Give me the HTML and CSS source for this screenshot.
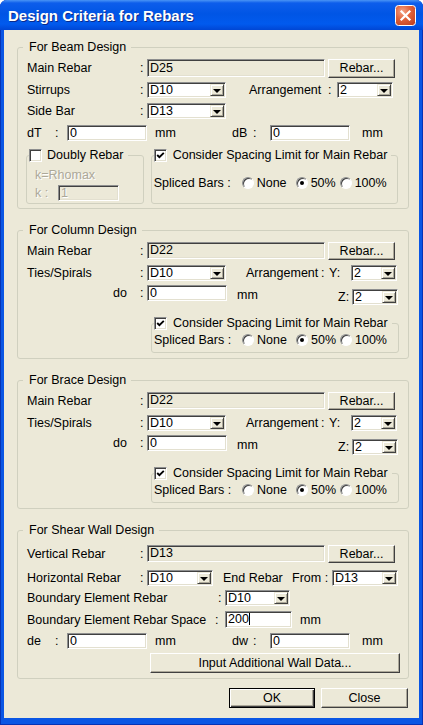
FILE: index.html
```html
<!DOCTYPE html>
<html lang="en">
<head>
  <meta charset="UTF-8" />
  <meta name="viewport" content="width=device-width, initial-scale=1.0"/>
  <title>Design Criteria for Rebars</title>
  <link rel="stylesheet" href="styles.css">
</head>
<body>

<div class="window">
  <div class="titlebar">
    <span class="title">Design Criteria for Rebars</span>
    <button class="close-btn" aria-label="Close">
      <svg width="21" height="21" viewBox="0 0 21 21">
        <defs>
          <radialGradient id="closeGrad" cx="35%" cy="30%" r="85%">
            <stop offset="0" stop-color="#F4A488"/>
            <stop offset="0.45" stop-color="#E2643C"/>
            <stop offset="1" stop-color="#C2401E"/>
          </radialGradient>
        </defs>
        <rect x="0.5" y="0.5" width="20" height="20" rx="3" fill="url(#closeGrad)" stroke="#fff"/>
        <path d="M6.5 6.5 L14.5 14.5 M14.5 6.5 L6.5 14.5" stroke="#fff" stroke-width="2.2" stroke-linecap="square"/>
      </svg>
    </button>
  </div>

  <div class="client">

    <!-- Beam -->
    <fieldset class="group">
      <legend>For Beam Design</legend>
      <div class="gbody">
        <div class="row tall mt5">
          <span class="lbl">Main Rebar</span><span class="colon">:</span>
          <span class="edit tall dis w-main">D25</span>
          <button class="btn btn-rebar">Rebar...</button>
        </div>
        <div class="row mt5">
          <span class="lbl">Stirrups</span><span class="colon">:</span>
          <span class="combo w79"><span class="val">D10</span><span class="drop"></span></span>
          <span class="arr-beam">Arrangement</span><span class="colon-9">:</span>
          <span class="combo w56"><span class="val">2</span><span class="drop"></span></span>
        </div>
        <div class="row mt5">
          <span class="lbl">Side Bar</span><span class="colon">:</span>
          <span class="combo w79"><span class="val">D13</span><span class="drop"></span></span>
        </div>
        <div class="row mt6">
          <span class="dlbl">dT</span><span class="dcolon">:</span>
          <span class="edit w80">0</span>
          <span class="mm-a">mm</span>
          <span class="dlbl2">dB</span><span class="dcolon2">:</span>
          <span class="edit w80">0</span>
          <span class="mm-b">mm</span>
        </div>

        <div class="subrow">
          <fieldset class="sub doubly">
            <legend class="chk-legend"><span class="chk"></span>Doubly Rebar</legend>
            <div class="doubly-body">
              <div class="dis-text rho">k=Rhomax</div>
              <div class="row krow">
                <span class="dis-text klbl">k :</span>
                <span class="edit dis w61"><span class="dis-text">1</span></span>
              </div>
            </div>
          </fieldset>
          <fieldset class="sub spacing">
            <legend class="chk-legend"><span class="chk on"><svg width="9" height="9" viewBox="0 0 9 9"><path d="M1.2 4 L3.4 6.2 L7.8 1.8" fill="none" stroke="#000" stroke-width="1.9"/></svg></span>Consider Spacing Limit for Main Rebar</legend>
            <div class="spliced beam-spl">
              <span class="spl-lbl">Spliced Bars :</span>
              <span class="opt o-none"><span class="radio"></span>None</span>
              <span class="opt o-50"><span class="radio on"></span>50%</span>
              <span class="opt"><span class="radio"></span>100%</span>
            </div>
          </fieldset>
        </div>
      </div>
    </fieldset>

    <!-- Column -->
    <fieldset class="group">
      <legend>For Column Design</legend>
      <div class="gbody pb5">
        <div class="row h17 mt5">
          <span class="lbl">Main Rebar</span><span class="colon">:</span>
          <span class="edit h17 dis w-main">D22</span>
          <button class="btn btn-rebar h17">Rebar...</button>
        </div>
        <div class="row mt6">
          <span class="lbl">Ties/Spirals</span><span class="colon">:</span>
          <span class="combo w79"><span class="val">D10</span><span class="drop"></span></span>
          <span class="arr-col">Arrangement</span><span class="axcolon">:</span><span class="axis">Y:</span>
          <span class="combo w46"><span class="val">2</span><span class="drop"></span></span>
        </div>
        <div class="row do-row mt4">
          <span class="lbl do">do</span><span class="colon">:</span>
          <span class="edit w80">0</span>
          <span class="mm-do">mm</span>
          <span class="zgroup"><span class="axis">Z:</span><span class="combo w46"><span class="val">2</span><span class="drop"></span></span></span>
        </div>
        <fieldset class="sub spacing solo">
          <legend class="chk-legend"><span class="chk on"><svg width="9" height="9" viewBox="0 0 9 9"><path d="M1.2 4 L3.4 6.2 L7.8 1.8" fill="none" stroke="#000" stroke-width="1.9"/></svg></span>Consider Spacing Limit for Main Rebar</legend>
          <div class="spliced">
            <span class="spl-lbl">Spliced Bars :</span>
            <span class="opt o-none"><span class="radio"></span>None</span>
            <span class="opt o-50"><span class="radio on"></span>50%</span>
            <span class="opt"><span class="radio"></span>100%</span>
          </div>
        </fieldset>
      </div>
    </fieldset>

    <!-- Brace -->
    <fieldset class="group">
      <legend>For Brace Design</legend>
      <div class="gbody pb5">
        <div class="row h17 mt5">
          <span class="lbl">Main Rebar</span><span class="colon">:</span>
          <span class="edit h17 dis w-main">D22</span>
          <button class="btn btn-rebar h17">Rebar...</button>
        </div>
        <div class="row mt6">
          <span class="lbl">Ties/Spirals</span><span class="colon">:</span>
          <span class="combo w79"><span class="val">D10</span><span class="drop"></span></span>
          <span class="arr-col">Arrangement</span><span class="axcolon">:</span><span class="axis">Y:</span>
          <span class="combo w46"><span class="val">2</span><span class="drop"></span></span>
        </div>
        <div class="row do-row mt4">
          <span class="lbl do">do</span><span class="colon">:</span>
          <span class="edit w80">0</span>
          <span class="mm-do">mm</span>
          <span class="zgroup"><span class="axis">Z:</span><span class="combo w46"><span class="val">2</span><span class="drop"></span></span></span>
        </div>
        <fieldset class="sub spacing solo">
          <legend class="chk-legend"><span class="chk on"><svg width="9" height="9" viewBox="0 0 9 9"><path d="M1.2 4 L3.4 6.2 L7.8 1.8" fill="none" stroke="#000" stroke-width="1.9"/></svg></span>Consider Spacing Limit for Main Rebar</legend>
          <div class="spliced">
            <span class="spl-lbl">Spliced Bars :</span>
            <span class="opt o-none"><span class="radio"></span>None</span>
            <span class="opt o-50"><span class="radio on"></span>50%</span>
            <span class="opt"><span class="radio"></span>100%</span>
          </div>
        </fieldset>
      </div>
    </fieldset>

    <!-- Shear wall -->
    <fieldset class="group">
      <legend>For Shear Wall Design</legend>
      <div class="gbody pb7">
        <div class="row h17 mt8">
          <span class="lbl">Vertical Rebar</span><span class="colon">:</span>
          <span class="edit h17 dis w-main">D13</span>
          <button class="btn btn-rebar h17">Rebar...</button>
        </div>
        <div class="row mt8">
          <span class="lbl">Horizontal Rebar</span><span class="colon">:</span>
          <span class="combo w66"><span class="val">D10</span><span class="drop"></span></span>
          <span class="endrebar">End Rebar</span><span class="from">From :</span>
          <span class="combo w66"><span class="val">D13</span><span class="drop"></span></span>
        </div>
        <div class="row mt4">
          <span class="lbl-be">Boundary Element Rebar</span><span class="colon">:</span>
          <span class="combo w65"><span class="val">D10</span><span class="drop"></span></span>
        </div>
        <div class="row h17 mt5">
          <span class="lbl-bes">Boundary Element Rebar Space</span><span class="colon-10">:</span>
          <span class="edit h17 w67">200<span class="caret"></span></span>
          <span class="mm-bes">mm</span>
        </div>
        <div class="row mt5">
          <span class="dlbl">de</span><span class="dcolon">:</span>
          <span class="edit w80">0</span>
          <span class="mm-a">mm</span>
          <span class="dlbl2">dw</span><span class="dcolon2">:</span>
          <span class="edit w80">0</span>
          <span class="mm-b">mm</span>
        </div>
        <div class="row mt6">
          <button class="btn btn-wall">Input Additional Wall Data...</button>
        </div>
      </div>
    </fieldset>

    <div class="footer">
      <button class="btn btn-ok">OK</button>
      <button class="btn btn-close">Close</button>
    </div>

  </div>
</div>

</body>
</html>
```

FILE: styles.css
```css
* {
  box-sizing: border-box;
}

body {
  margin: 0;
  background: #fff;
  font-family: "Liberation Sans", Arial, sans-serif;
  font-size: 12.5px;
  color: #000;
}

/* window frame */
.window {
  width: 423px;
  height: 725px;
  background: #0A56E4;
  border-radius: 7px 7px 0 0;
  overflow: hidden;
  box-shadow: inset 1px 0 0 #0633B5, inset -1px 0 0 #0633B5, inset 0 -1px 0 #0633B5;
}

.titlebar {
  height: 30px;
  display: flex;
  align-items: center;
  justify-content: space-between;
  padding: 0 7px 0 8px;
  background: linear-gradient(180deg, #4A94F5 0px, #0D5DEB 3px, #0055E5 14px, #015AEE 24px, #0046D4 30px);
}

.title {
  color: #fff;
  font-weight: bold;
  font-size: 15px;
  text-shadow: 1px 1px 0 #0B2A8A;
}

.close-btn {
  width: 21px;
  height: 21px;
  padding: 0;
  border: 0;
  background: none;
  display: block;
}

.close-btn svg {
  display: block;
}

.client {
  margin: 0 4px;
  height: 688px;
  background: #ECE9D8;
  padding-top: 10px;
}

/* group boxes */
.group {
  margin: 0 0 0 13px;
  width: 392px;
  min-width: 0;
  padding: 0;
  border: 1px solid #D0D0BF;
  border-radius: 3px;
}

.group + .group {
  margin-top: 14px;
}

.group > legend {
  margin-left: 5px;
  padding: 0 5px 0 6px;
  line-height: 14px;
}

.gbody {
  padding: 0 10px 4px 9px;
}

.pb5 { padding-bottom: 5px; }
.pb7 { padding-bottom: 7px; }

.mt4 { margin-top: 4px; }
.mt5 { margin-top: 5px; }
.mt6 { margin-top: 6px; }
.mt8 { margin-top: 8px; }

.row {
  display: flex;
  align-items: center;
  height: 16px;
  white-space: nowrap;
}

.row > * {
  flex: none;
}

.row.tall { height: 18px; }
.row.h17 { height: 17px; }

.lbl { width: 113px; }
.lbl.do { padding-left: 86px; }
.colon { width: 7px; }
.colon-9 { width: 9px; }
.colon-10 { width: 10px; }

/* edit boxes */
.edit {
  display: block;
  height: 16px;
  background: #fff;
  border: 1px solid;
  border-color: #8E8F8F #FFFFFF #FFFFFF #8E8F8F;
  box-shadow: inset 1px 1px 0 #404040, inset -1px -1px 0 #E3E0D0;
  padding: 0 2px;
  line-height: 14px;
  overflow: hidden;
}

.edit.tall { height: 18px; line-height: 16px; }
.edit.h17 { height: 17px; line-height: 15px; }
.edit.dis { background: #ECE9D8; }

.w-main { width: 178px; }
.w80 { width: 80px; }
.w61 { width: 61px; }
.w67 { width: 67px; }

.caret {
  display: inline-block;
  width: 1px;
  height: 12px;
  background: #000;
  vertical-align: -2px;
}

/* combo boxes */
.combo {
  display: flex;
  height: 16px;
  padding: 1px;
  background: #fff;
  border: 1px solid;
  border-color: #8E8F8F #FFFFFF #FFFFFF #8E8F8F;
  box-shadow: inset 1px 1px 0 #404040, inset -1px -1px 0 #E3E0D0;
}

.combo .val {
  flex: 1;
  padding-left: 1px;
  line-height: 12px;
}

.combo .drop {
  width: 14px;
  display: flex;
  align-items: center;
  justify-content: center;
  background: #ECE9D8;
  border: 1px solid;
  border-color: #ECE9D8 #404040 #404040 #ECE9D8;
  box-shadow: inset 1px 1px 0 #fff, inset -1px -1px 0 #ACA899;
}

.combo .drop::after {
  content: "";
  width: 0;
  height: 0;
  border-left: 4px solid transparent;
  border-right: 4px solid transparent;
  border-top: 4px solid #000;
  margin-top: 1px;
}

.w79 { width: 79px; }
.w56 { width: 56px; }
.w46 { width: 46px; }
.w66 { width: 66px; }
.w65 { width: 65px; }

/* buttons */
.btn {
  font: inherit;
  color: #000;
  padding: 0;
  height: 19px;
  background: #ECE9D8;
  border: 1px solid;
  border-color: #fff #404040 #404040 #fff;
  box-shadow: inset -1px -1px 0 #ACA899;
}

.btn-rebar {
  width: 67px;
  margin-left: 3px;
}

.btn.h17 { height: 18px; }

.btn-wall {
  width: 250px;
  height: 20px;
  margin-left: 123px;
}

/* beam rows */
.arr-beam {
  width: 79px;
  margin-left: 23px;
}

.dlbl { width: 28px; }
.dcolon { width: 12px; }
.mm-a { width: 77px; margin-left: 8px; }
.dlbl2 { width: 21px; }
.dcolon2 { width: 17px; }
.mm-b { margin-left: 12px; }

/* sub group boxes */
.subrow {
  display: flex;
  gap: 7px;
  height: 56px;
  margin: 7px 0 0 -1px;
}

.sub {
  margin: 0;
  min-width: 0;
  padding: 0;
  border: 1px solid #D0D0BF;
  border-radius: 3px;
}

.chk-legend {
  display: flex;
  align-items: center;
  height: 14px;
  line-height: 14px;
  padding: 0 4px 0 0;
}

.doubly {
  width: 118px;
}

.doubly .chk-legend {
  margin-left: 2px;
  gap: 5px;
  padding-right: 5px;
}

.doubly-body {
  padding-left: 8px;
}

.spacing {
  width: 248px;
}

.spacing .chk-legend {
  margin-left: 2px;
  gap: 6px;
}

.spacing.solo {
  margin: 11px 0 0 124px;
}

.chk {
  width: 13px;
  height: 13px;
  display: flex;
  align-items: center;
  justify-content: center;
  background: #fff;
  border: 1px solid;
  border-color: #8E8F8F #fff #fff #8E8F8F;
  box-shadow: inset 1px 1px 0 #404040, inset -1px -1px 0 #E3E0D0;
}

.chk svg {
  display: block;
}

.dis-text {
  color: #ACA899;
  text-shadow: 1px 1px 0 #fff;
}

.rho {
  margin-top: 6px;
  line-height: 14px;
}

.krow {
  margin-top: 3px;
}

.klbl { width: 23px; }

.spliced {
  display: flex;
  align-items: center;
  height: 16px;
  margin: 2px 0 4px 2px;
  white-space: nowrap;
}

.beam-spl {
  margin-top: 13px;
}

.spl-lbl { width: 88px; }

.opt {
  display: flex;
  align-items: center;
  gap: 3px;
}

.o-none { width: 54px; }
.o-50 { width: 44px; }

.radio {
  width: 12px;
  height: 12px;
  display: flex;
  align-items: center;
  justify-content: center;
  border-radius: 50%;
  background: #fff;
  border: 1px solid;
  border-color: #8E8F8F #fff #fff #8E8F8F;
  box-shadow: inset 1px 1px 0 #404040;
}

.radio.on::after {
  content: "";
  width: 4px;
  height: 4px;
  border-radius: 50%;
  background: #000;
}

/* column / brace rows */
.arr-col {
  width: 75px;
  margin-left: 20px;
}

.axcolon { width: 8px; }
.axis { width: 14px; }
.arr-col + .axcolon + .axis { width: 22px; }

.row.do-row {
  height: 20px;
  align-items: flex-start;
  line-height: 16px;
}

.mm-do {
  margin: 2px 0 0 10px;
}

.zgroup {
  display: flex;
  align-items: center;
  margin: 4px 0 0 auto;
}

/* shear wall rows */
.endrebar { width: 69px; margin-left: 10px; }
.from { width: 40px; }
.lbl-be { width: 191px; }
.lbl-bes { width: 188px; }
.mm-bes { margin-left: 8px; }

/* footer buttons */
.footer {
  display: flex;
  justify-content: flex-end;
  gap: 6px;
  margin-top: 9px;
  padding-right: 11px;
}

.btn-ok,
.btn-close {
  height: 20px;
}

.btn-ok {
  width: 86px;
  border-color: #000;
  box-shadow: inset 1px 1px 0 #fff, inset -1px -1px 0 #404040, inset -2px -2px 0 #ACA899;
}

.btn-close {
  width: 87px;
}
```
